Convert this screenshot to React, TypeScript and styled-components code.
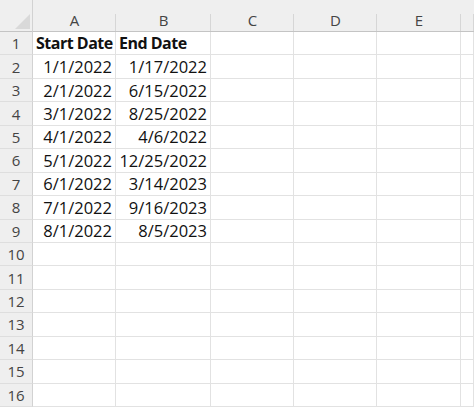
import React from "react";
import styled, { createGlobalStyle } from "styled-components";

const GlobalStyle = createGlobalStyle`
  html, body {
    margin: 0;
    padding: 0;
    background: #ffffff;
    overflow: hidden;
  }
`;

const columns = ["A", "B", "C", "D", "E", ""];
const rowCount = 16;

const data: (string | null)[][] = [
  ["Start Date", "End Date"],
  ["1/1/2022", "1/17/2022"],
  ["2/1/2022", "6/15/2022"],
  ["3/1/2022", "8/25/2022"],
  ["4/1/2022", "4/6/2022"],
  ["5/1/2022", "12/25/2022"],
  ["6/1/2022", "3/14/2023"],
  ["7/1/2022", "9/16/2023"],
  ["8/1/2022", "8/5/2023"],
];

function Sheet() {
  const rows = Array.from({ length: rowCount }, (_, i) => i);
  return (
    <Grid>
      <Corner>
        <svg width="17" height="17" viewBox="0 0 17 17">
          <polygon points="16,1 16,16 1,16" fill="#d9d9d9" />
        </svg>
      </Corner>
      {columns.map((c, i) => (
        <ColHead key={`h${i}`}>{c}</ColHead>
      ))}
      {rows.map((r) => (
        <React.Fragment key={r}>
          <RowHead>{r + 1}</RowHead>
          {columns.map((_, ci) => {
            const value = data[r]?.[ci] ?? null;
            const isHeader = r === 0;
            return (
              <Cell key={ci} $bold={isHeader && !!value} $right={!isHeader}>
                {value}
              </Cell>
            );
          })}
        </React.Fragment>
      ))}
    </Grid>
  );
}

export default function App() {
  return (
    <>
      <GlobalStyle />
      <Sheet />
    </>
  );
}

const Grid = styled.div`
  display: grid;
  grid-template-columns: 33px 83px 95px 83px 83px 84px 1fr;
  grid-template-rows: 32px repeat(16, 23.44px) 1fr;
  width: 474px;
  height: 413px;
  font-family: "Open Sans", "Noto Sans", sans-serif;
`;

const Corner = styled.div`
  background: #efefef;
  border-bottom: 1px solid #c4c4c4;
  border-right: 1px solid #d2d2d2;
  box-sizing: border-box;
  display: flex;
  align-items: flex-end;
  justify-content: flex-end;
  padding: 0 1px 1px 0;
`;

const ColHead = styled.div`
  background: linear-gradient(#d6d6d6, #d6d6d6) right bottom / 1px 55% no-repeat,
    #efefef;
  border-bottom: 1px solid #c4c4c4;
  box-sizing: border-box;
  display: flex;
  align-items: center;
  justify-content: center;
  padding-top: 8px;
  font-size: 15px;
  color: #444444;
`;

const RowHead = styled.div`
  background: #efefef;
  border-right: 1px solid #d2d2d2;
  border-bottom: 1px solid #dedede;
  box-sizing: border-box;
  display: flex;
  align-items: center;
  justify-content: center;
  font-size: 15px;
  color: #444444;
`;

const Cell = styled.div<{ $bold?: boolean; $right?: boolean }>`
  border-right: 1px solid #e2e2e2;
  border-bottom: 1px solid #e2e2e2;
  box-sizing: border-box;
  display: flex;
  align-items: center;
  justify-content: ${(p) => (p.$right ? "flex-end" : "flex-start")};
  padding: 0 3px;
  font-size: ${(p) => (p.$bold ? "16px" : "16.5px")};
  font-weight: ${(p) => (p.$bold ? 700 : 400)};
  letter-spacing: ${(p) => (p.$bold ? "-0.5px" : "0")};
  color: #111111;
  white-space: nowrap;
  overflow: hidden;
`;
